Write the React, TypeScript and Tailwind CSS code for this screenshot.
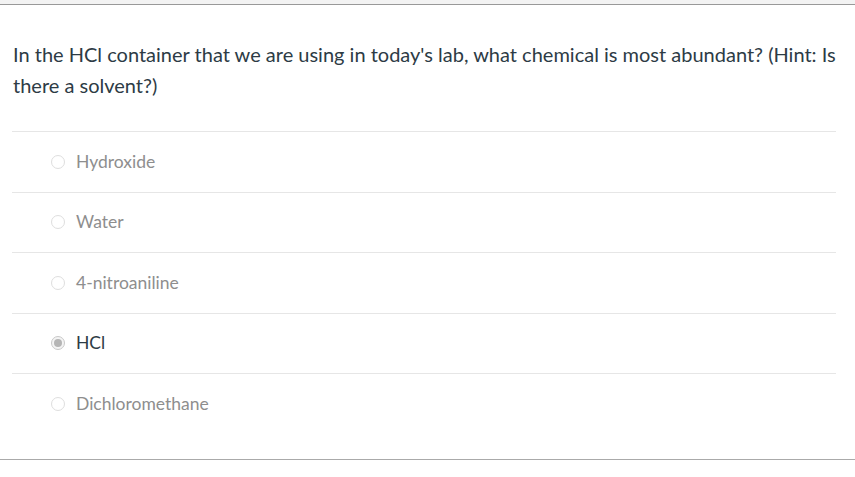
import React from "react";

const options = [
  { label: "Hydroxide", selected: false },
  { label: "Water", selected: false },
  { label: "4-nitroaniline", selected: false },
  { label: "HCl", selected: true },
  { label: "Dichloromethane", selected: false },
];

export default function App() {
  return (
    <div className="w-[855px] h-[477px] bg-white overflow-hidden" style={{ fontFamily: "Lato, 'Open Sans', sans-serif" }}>
      <div className="h-[4px] bg-[#f3f3f3]" />
      <div className="h-px bg-[#999999]" />
      <div className="pl-[13px] pr-[12px] pt-[34px] text-[20px] leading-[31px] text-[#2d3b45]">
        In the HCl container that we are using in today's lab, what chemical is most abundant? (Hint: Is there a solvent?)
      </div>
      <div className="mx-[12px] mt-[30px] w-[824px]">
        {options.map((o) => (
          <div key={o.label} className="h-[60.5px] border-t border-[#e6e6e6] flex items-center pl-[39px]">
            <span
              className={
                "w-[14px] h-[14px] rounded-full border flex items-center justify-center " +
                (o.selected ? "border-[#c8c8c8] bg-[#f4f4f4]" : "border-[#dedede] bg-white")
              }
            >
              {o.selected && <span className="w-[8px] h-[8px] rounded-full bg-[#b5b5b5]" />}
            </span>
            <span className={"ml-[11px] text-[17.5px] " + (o.selected ? "text-[#2d3b45]" : "text-[#8e8e8e]")}>{o.label}</span>
          </div>
        ))}
      </div>
      <div className="mt-[25px] h-px bg-[#aaaaaa]" />
    </div>
  );
}
